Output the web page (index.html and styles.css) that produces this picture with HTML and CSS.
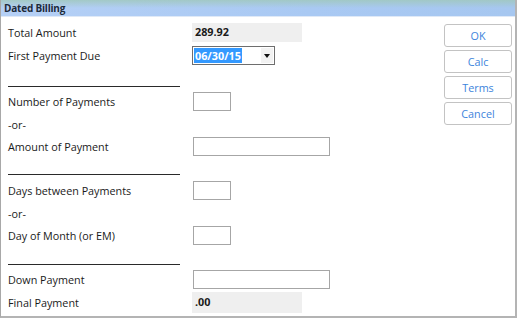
FILE: index.html
```html
<!DOCTYPE html>
<html>
<head>
<meta charset="utf-8">
<link rel="stylesheet" href="styles.css">
</head>
<body>
<div class="window">
  <div class="titlebar">Dated Billing</div>
  <div class="content">
    <div class="form">
      <div class="row r-first">
        <span class="label">Total Amount</span>
        <div class="field readonly wide-s">289.92</div>
      </div>
      <div class="row r-gap4">
        <span class="label">First Payment Due</span>
        <div class="select">
          <span class="sel-text">06/30/15</span>
          <span class="arrow"></span>
        </div>
      </div>
      <div class="sep sep-20"></div>
      <div class="row r-gap5">
        <span class="label">Number of Payments</span>
        <div class="field small"></div>
      </div>
      <div class="row r-gap4">
        <span class="label">-or-</span>
      </div>
      <div class="row r-gap3">
        <span class="label">Amount of Payment</span>
        <div class="field wide"></div>
      </div>
      <div class="sep sep-18"></div>
      <div class="row r-gap6">
        <span class="label">Days between Payments</span>
        <div class="field small"></div>
      </div>
      <div class="row r-gap4">
        <span class="label">-or-</span>
      </div>
      <div class="row r-gap3">
        <span class="label">Day of Month (or EM)</span>
        <div class="field small"></div>
      </div>
      <div class="sep sep-19"></div>
      <div class="row r-gap5">
        <span class="label">Down Payment</span>
        <div class="field wide"></div>
      </div>
      <div class="row r-gap3 r-tall">
        <span class="label">Final Payment</span>
        <div class="field readonly wide-s tall">.00</div>
      </div>
    </div>
    <div class="buttons">
      <button class="btn">OK</button>
      <button class="btn">Calc</button>
      <button class="btn">Terms</button>
      <button class="btn">Cancel</button>
    </div>
  </div>
</div>
</body>
</html>
```
FILE: styles.css
```css
* { box-sizing: border-box; }
html, body { margin: 0; padding: 0; background: #ffffff; }
body {
  width: 517px;
  height: 318px;
  overflow: hidden;
  font-family: "Open Sans", "Noto Sans", sans-serif;
  font-size: 10.8px;
  color: #1a1a1a;
}
.window {
  width: 517px;
  height: 318px;
  border-left: 1px solid #a8a8a8;
  border-right: 2px solid #b4b4b4;
  border-bottom: 2px solid #b4b4b4;
  display: flex;
  flex-direction: column;
}
.titlebar {
  height: 17px;
  flex: none;
  padding-left: 3px;
  font-size: 10px;
  font-weight: 700;
  line-height: 16px;
  color: #1c2a3a;
  background:
    linear-gradient(to bottom, rgba(160, 200, 190, 0.85) 0, rgba(160, 200, 190, 0) 8px),
    linear-gradient(to right, #b5d0f6, #a9c9f3 60%, #a6c7f0);
  border-bottom: 1px solid #dfe9f7;
  letter-spacing: -0.2px;
}
.content {
  flex: 1;
  display: flex;
  justify-content: space-between;
  padding: 6px 3px 0 7px;
}
.form {
  display: flex;
  flex-direction: column;
}
.row {
  display: flex;
  align-items: center;
  height: 19px;
}
.r-tall { height: 21px; }
.r-gap3 { margin-top: 3px; }
.r-gap4 { margin-top: 4px; }
.r-gap5 { margin-top: 5px; }
.r-gap6 { margin-top: 6px; }
.label {
  width: 184px;
  flex: none;
  white-space: nowrap;
}
.sep {
  width: 172px;
  height: 1px;
  background: #2a2a2a;
}
.sep-20 { margin-top: 21px; }
.sep-18 { margin-top: 18px; }
.sep-19 { margin-top: 19px; }
.field {
  height: 19px;
  border: 1px solid #a6a6a6;
  background: #ffffff;
  margin-left: 1px;
}
.field.small { width: 38px; }
.field.wide { width: 137px; }
.field.readonly {
  border: none;
  background: #efefef;
  font-weight: 700;
  padding-left: 3px;
  line-height: 18px;
  margin-left: 0;
}
.field.wide-s { width: 110px; }
.field.tall { height: 21px; line-height: 20px; }
.select {
  width: 83px;
  height: 19px;
  border: 1px solid #6e6e6e;
  display: flex;
  align-items: center;
  justify-content: space-between;
  padding: 1px;
}
.sel-text {
  background: #3399ff;
  color: #ffffff;
  font-weight: 700;
  height: 15px;
  line-height: 15px;
  padding: 0 1px 0 1px;
}
.arrow {
  width: 12px;
  height: 15px;
  background: #f2f2f2;
  position: relative;
}
.arrow::after {
  content: "";
  position: absolute;
  left: 3px;
  top: 6px;
  border-left: 3px solid transparent;
  border-right: 3px solid transparent;
  border-top: 4px solid #111111;
}
.buttons {
  display: flex;
  flex-direction: column;
  gap: 3px;
  padding-top: 1px;
}
.btn {
  width: 68px;
  height: 23px;
  background: #ffffff;
  border: 1px solid #c3c3c3;
  border-radius: 3px;
  color: #3d84dc;
  font-family: "Open Sans", "Noto Sans", sans-serif;
  font-size: 10.8px;
  padding: 0;
}
```
